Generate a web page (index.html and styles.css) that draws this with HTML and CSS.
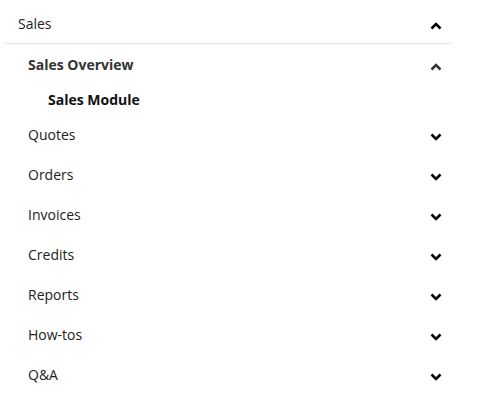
FILE: index.html
```html
<!DOCTYPE html>
<html lang="en">
  <head>
    <meta charset="UTF-8" />
    <meta name="viewport" content="width=device-width, initial-scale=1.0" />
    <title>Sales</title>
    <link rel="stylesheet" href="styles.css">
  </head>
  <body>
    <div class="menu">
      <div class="menu-head">
        <span>Sales</span>
        <svg class="chevron" viewBox="0 0 12 8"><polyline points="1.5,6.5 6,2 10.5,6.5" /></svg>
      </div>

      <div class="item item-open">
        <span>Sales Overview</span>
        <svg class="chevron dim" viewBox="0 0 12 8"><polyline points="1.5,6.5 6,2 10.5,6.5" /></svg>
      </div>
      <div class="subitem">Sales Module</div>

      <div class="item">
        <span>Quotes</span>
        <svg class="chevron" viewBox="0 0 12 8"><polyline points="1.5,1.5 6,6 10.5,1.5" /></svg>
      </div>
      <div class="item">
        <span>Orders</span>
        <svg class="chevron" viewBox="0 0 12 8"><polyline points="1.5,1.5 6,6 10.5,1.5" /></svg>
      </div>
      <div class="item">
        <span>Invoices</span>
        <svg class="chevron" viewBox="0 0 12 8"><polyline points="1.5,1.5 6,6 10.5,1.5" /></svg>
      </div>
      <div class="item">
        <span>Credits</span>
        <svg class="chevron" viewBox="0 0 12 8"><polyline points="1.5,1.5 6,6 10.5,1.5" /></svg>
      </div>
      <div class="item">
        <span>Reports</span>
        <svg class="chevron" viewBox="0 0 12 8"><polyline points="1.5,1.5 6,6 10.5,1.5" /></svg>
      </div>
      <div class="item">
        <span>How-tos</span>
        <svg class="chevron" viewBox="0 0 12 8"><polyline points="1.5,1.5 6,6 10.5,1.5" /></svg>
      </div>
      <div class="item">
        <span>Q&amp;A</span>
        <svg class="chevron" viewBox="0 0 12 8"><polyline points="1.5,1.5 6,6 10.5,1.5" /></svg>
      </div>
    </div>
  </body>
</html>
```

FILE: styles.css
```css
body {
  margin: 0;
  padding: 4px;
  font-family: "Open Sans", sans-serif;
  font-size: 14px;
  color: #222;
  background: #fff;
}

.menu {
  width: 448px;
}

.menu-head {
  display: flex;
  justify-content: space-between;
  align-items: center;
  height: 39px;
  padding: 0 10px 0 14px;
  border-bottom: 1px solid #e4e4e4;
  border-radius: 0 0 4px 4px;
  box-shadow: 0 1px 1px rgba(0, 0, 0, 0.03);
}

.item {
  display: flex;
  justify-content: space-between;
  align-items: center;
  height: 40px;
  padding: 0 10px 0 24px;
}

.item-open span {
  font-weight: bold;
  color: #333;
}

.subitem {
  display: flex;
  align-items: center;
  height: 30px;
  padding-left: 44px;
  font-weight: bold;
  color: #111;
}

.chevron {
  width: 12px;
  height: 8px;
  margin-top: 5px;
  fill: none;
  stroke: #000;
  stroke-width: 2.5;
}

.chevron.dim {
  stroke: #333;
}
```
